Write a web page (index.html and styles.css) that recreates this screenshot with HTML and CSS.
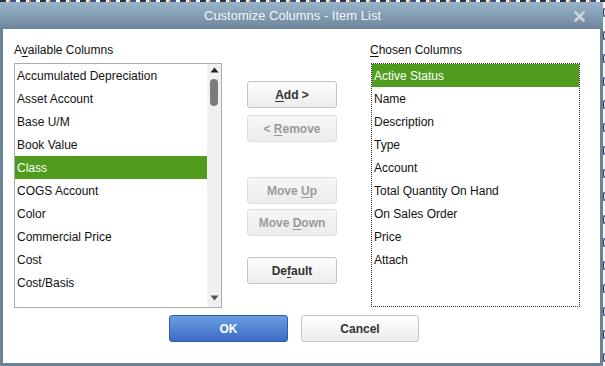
FILE: index.html
```html
<!DOCTYPE html>
<html lang="en">
<head>
  <meta charset="UTF-8" />
  <meta name="viewport" content="width=device-width, initial-scale=1.0" />
  <title>Customize Columns - Item List</title>
  <link rel="stylesheet" href="styles.css">
</head>
<body>
  <div class="app-top"></div>
  <div class="screen">
    <div class="dialog">
      <div class="titlebar">
        <span class="title">Customize Columns - Item List</span>
        <svg class="close" width="11" height="11" viewBox="0 0 11 11">
          <path d="M1.5 1.5 L9.5 9.5 M9.5 1.5 L1.5 9.5" stroke="#c9d4de" stroke-width="2.6" stroke-linecap="square" />
        </svg>
      </div>

      <div class="content">
        <div class="columns">
          <div class="col col-available">
            <div class="label">A<u>v</u>ailable Columns</div>
            <div class="listbox">
              <ul class="items">
                <li>Accumulated Depreciation</li>
                <li>Asset Account</li>
                <li>Base U/M</li>
                <li>Book Value</li>
                <li class="selected">Class</li>
                <li>COGS Account</li>
                <li>Color</li>
                <li>Commercial Price</li>
                <li>Cost</li>
                <li>Cost/Basis</li>
              </ul>
              <div class="scrollbar">
                <svg class="arrow" width="9" height="6" viewBox="0 0 9 6"><path d="M0.5 5.5 L4.5 0.5 L8.5 5.5 Z" fill="#222" /></svg>
                <div class="thumb"></div>
                <div class="track"></div>
                <svg class="arrow" width="9" height="6" viewBox="0 0 9 6"><path d="M0.5 0.5 L4.5 5.5 L8.5 0.5 Z" fill="#555" /></svg>
              </div>
            </div>
          </div>

          <div class="actions">
            <button class="btn btn-add"><u>A</u>dd &gt;</button>
            <button class="btn btn-remove" disabled>&lt; <u>R</u>emove</button>
            <button class="btn btn-up" disabled>Move <u>U</u>p</button>
            <button class="btn btn-down" disabled>Move <u>D</u>own</button>
            <button class="btn btn-default">De<u>f</u>ault</button>
          </div>

          <div class="col col-chosen">
            <div class="label"><u>C</u>hosen Columns</div>
            <div class="listbox listbox-focus">
              <ul class="items">
                <li class="selected">Active Status</li>
                <li>Name</li>
                <li>Description</li>
                <li>Type</li>
                <li>Account</li>
                <li>Total Quantity On Hand</li>
                <li>On Sales Order</li>
                <li>Price</li>
                <li>Attach</li>
              </ul>
            </div>
          </div>
        </div>

        <div class="footer">
          <button class="btn btn-ok">OK</button>
          <button class="btn btn-cancel">Cancel</button>
        </div>
      </div>
    </div>
    <!-- edge of the list window behind the dialog -->
    <div class="app-edge">
      <i></i><i></i><i></i><i></i><i></i><i></i><i></i><i></i><i></i><i></i><i></i><i></i><i></i><i></i><i></i><i></i>
    </div>
  </div>
</body>
</html>
```

FILE: styles.css
```css
* {
  box-sizing: border-box;
}
body {
  margin: 0;
  width: 605px;
  height: 366px;
  overflow: hidden;
  font-family: "Liberation Sans", Arial, sans-serif;
  font-size: 12px;
  color: #111;
  background: #fff;
}
.app-top {
  height: 2px;
  background: repeating-linear-gradient(90deg, #2a3140 0 6px, #f4f4f4 6px 9px, #b57a2a 9px 11px, #3a4f8a 11px 16px, #fff 16px 20px);
}
.screen {
  display: flex;
  height: 364px;
}
.dialog {
  width: 603px;
  height: 364px;
  display: flex;
  flex-direction: column;
  background: #6b8398;
}
.titlebar {
  height: 27px;
  display: flex;
  align-items: center;
  justify-content: center;
  padding-right: 18px;
  background: linear-gradient(#9ab4c9, #6c859a);
  position: relative;
}
.title {
  color: #f2f6f9;
  font-size: 13px;
}
.close {
  position: absolute;
  right: 18px;
  top: 9px;
}
.content {
  flex: 1;
  margin: 0 3px 3px 3px;
  background: #fff;
  padding: 14px 0 0 11px;
}
.columns {
  display: flex;
}
.col-available {
  width: 208px;
}
.col-chosen {
  width: 209px;
  margin-left: 34px;
}
.col-chosen .label {
  margin-left: -1px;
}
.label {
  line-height: 14px;
  margin-bottom: 6px;
}
.label u, .btn u {
  text-decoration-thickness: 1px;
  text-underline-offset: 2px;
}
.listbox {
  height: 245px;
  border: 1px solid #ababab;
  display: flex;
}
.listbox-focus {
  border: 1px dotted #333;
  height: 244px;
}
.items {
  list-style: none;
  margin: 0;
  padding: 0;
  flex: 1;
}
.items li {
  height: 23px;
  line-height: 22px;
  padding: 1px 0 0 2px;
  white-space: nowrap;
}
.items li.selected {
  background: #509c1e;
  color: #fff;
}
.scrollbar {
  width: 14px;
  background: #f0f0f0;
  display: flex;
  flex-direction: column;
  align-items: center;
  padding: 3px 0 6px 0;
}
.thumb {
  width: 8px;
  height: 27px;
  margin-top: 6px;
  border-radius: 4px;
  background: #7b7b7b;
}
.track {
  flex: 1;
}
.actions {
  width: 90px;
  margin-left: 25px;
  padding-top: 38px;
  display: flex;
  flex-direction: column;
}
.btn {
  height: 27px;
  padding: 0;
  font-family: "Liberation Sans", Arial, sans-serif;
  font-size: 12px;
  font-weight: bold;
  color: #333;
  background: linear-gradient(#fdfdfd, #ececec);
  border: 1px solid #c4c4c4;
  border-radius: 3px;
}
.btn:disabled {
  color: #9a9a9a;
  border-color: #dedede;
  background: linear-gradient(#f6f6f6, #ececec);
}
.btn-remove {
  margin-top: 7px;
}
.btn-up {
  margin-top: 35px;
}
.btn-down {
  margin-top: 5px;
}
.btn-default {
  margin-top: 21px;
}
.footer {
  display: flex;
  gap: 13px;
  margin-top: 7px;
  padding-left: 155px;
}
.btn-ok {
  width: 119px;
  color: #fff;
  border-color: #2f5ea8;
  background: linear-gradient(#6b9de2, #3c6cc4);
}
.btn-cancel {
  width: 118px;
}
.app-edge {
  flex: 1;
  background: #f3f7fc;
  overflow: hidden;
  display: flex;
  flex-direction: column;
  gap: 14px;
  padding-top: 6px;
}
.app-edge i {
  flex: none;
  width: 6px;
  height: 9px;
  border: 1px solid #1c2a6e;
  border-radius: 3px;
  box-shadow: -1px 0 #a01818;
}
```
